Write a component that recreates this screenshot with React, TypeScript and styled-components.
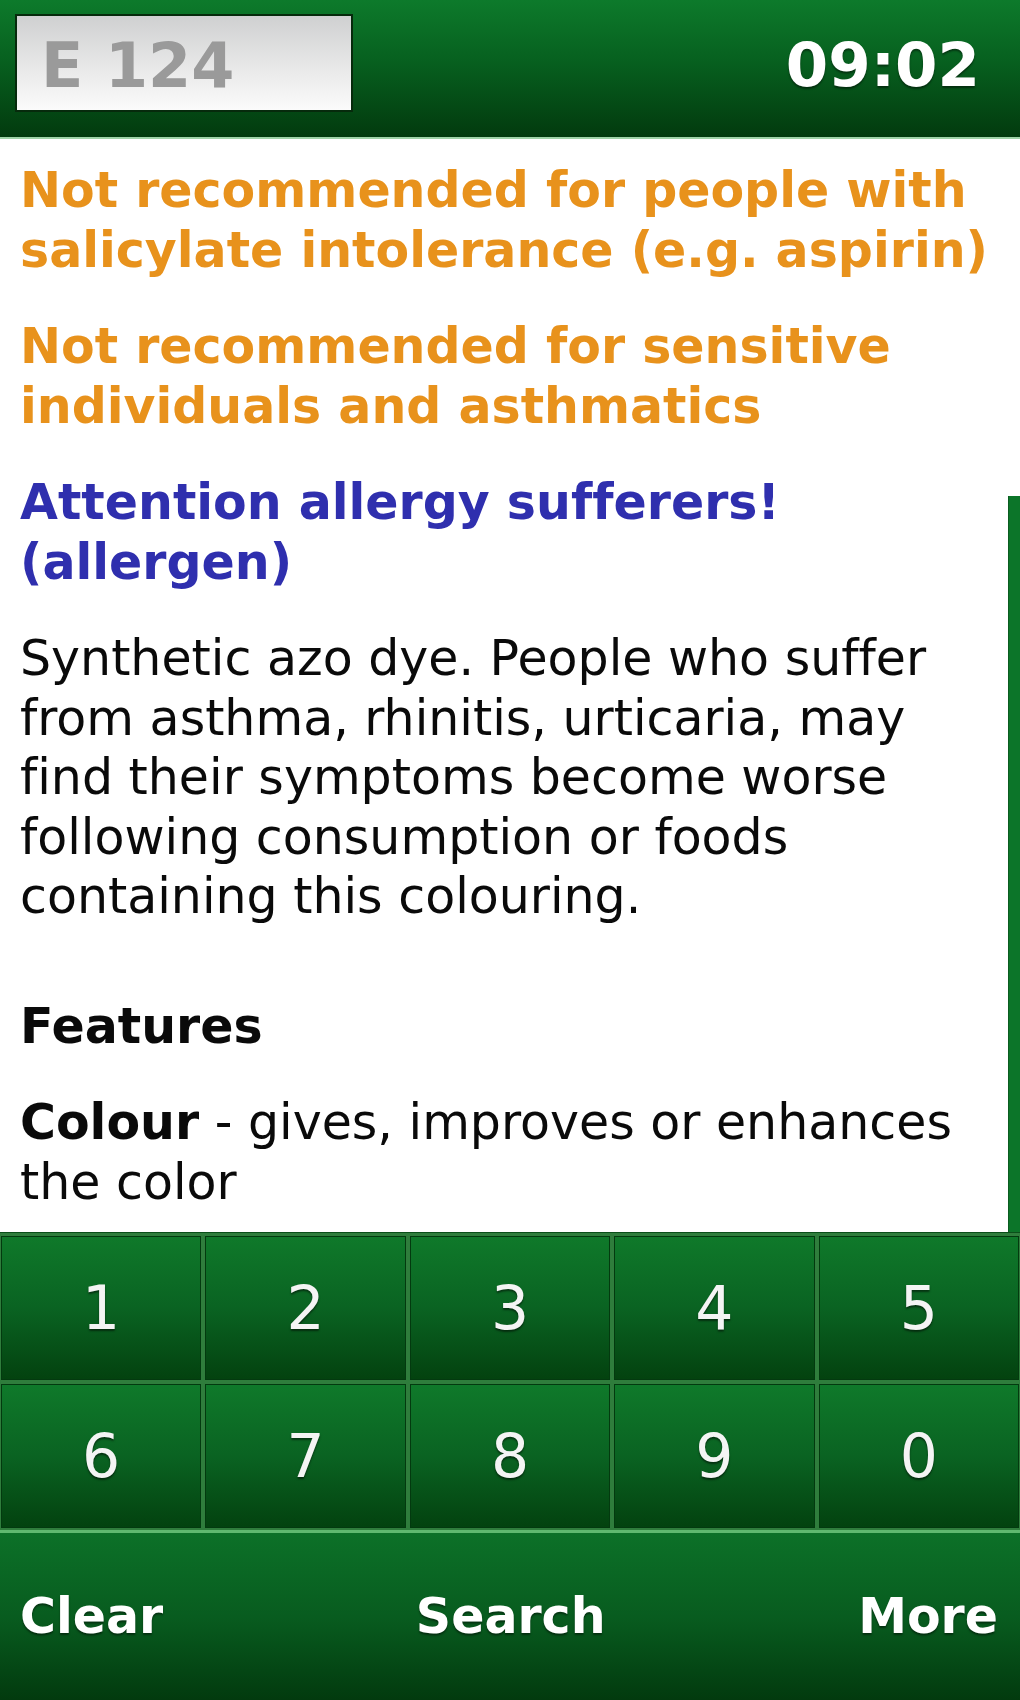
import React, { FC } from 'react'
import styled, { createGlobalStyle } from 'styled-components'

const GlobalStyle = createGlobalStyle`
  html, body {
    margin: 0;
    padding: 0;
    background: #ffffff;
  }
  body {
    font-family: 'DejaVu Sans', 'Noto Sans', sans-serif;
    font-variant-ligatures: none;
  }
`

const Screen = styled.div`
  width: 1020px;
  height: 1700px;
  display: flex;
  flex-direction: column;
  overflow: hidden;
  background: #ffffff;
`

const TopBar = styled.div`
  height: 137px;
  flex: none;
  display: flex;
  align-items: center;
  justify-content: space-between;
  padding: 0 40px 0 15px;
  background: linear-gradient(to bottom, #0d7a2b 0%, #07601f 45%, #023a0e 100%);
  border-bottom: 2px solid #9fd3a8;
`

const CodeField = styled.div`
  width: 338px;
  height: 98px;
  margin-top: -12px;
  display: flex;
  align-items: center;
  padding: 6px 0 0 24px;
  box-sizing: border-box;
  border: 2px solid #062a0c;
  background: linear-gradient(to bottom, #cfd0d1 0%, #e6e6e6 50%, #fbfbfb 100%);
  color: #9a9a9a;
  font-weight: bold;
  font-size: 62px;
`

const Clock = styled.div`
  color: #ffffff;
  font-weight: bold;
  font-size: 61px;
  margin-top: -8px;
  text-shadow: 0 2px 2px rgba(0, 0, 0, 0.45);
`

const Content = styled.div`
  position: relative;
  flex: none;
  height: 1093px;
  box-sizing: border-box;
  overflow: hidden;
  padding: 22px 12px 0 20px;
`

const Para = styled.p<{ $tone?: 'warn' | 'allergy' | 'plain'; $bold?: boolean; $gap?: number }>`
  margin: 0 0 ${p => p.$gap ?? 37}px 0;
  font-size: 49px;
  line-height: 59.5px;
  font-weight: ${p => (p.$bold ? 'bold' : 'normal')};
  color: ${p =>
    p.$tone === 'warn' ? '#e8921c' : p.$tone === 'allergy' ? '#2f2fae' : '#0a0a0a'};
`

const Scrollbar = styled.div`
  position: absolute;
  right: 0;
  top: 357px;
  bottom: 0;
  width: 11px;
  background: #0c7529;
  border-left: 1px solid #0a5c20;
`

const Keypad = styled.div`
  flex: none;
  height: 298px;
  box-sizing: border-box;
  display: grid;
  grid-template-columns: repeat(5, 1fr);
  grid-template-rows: repeat(2, 1fr);
  gap: 4px;
  padding: 3px 1px 2px 1px;
  background: #2f7d3c;
  border-top: 1px solid #0b4f1a;
`

const Key = styled.button`
  border: 1px solid #033a0f;
  border-radius: 0;
  margin: 0;
  padding: 0;
  display: flex;
  align-items: center;
  justify-content: center;
  background: linear-gradient(to bottom, #0f792a 0%, #0a6322 50%, #03420f 100%);
  color: #f4f4f4;
  font-family: 'DejaVu Sans', sans-serif;
  font-size: 60px;
  text-shadow: 0 2px 2px rgba(0, 0, 0, 0.5);
  cursor: pointer;
`

const BottomBar = styled.div`
  flex: none;
  height: 170px;
  box-sizing: border-box;
  display: flex;
  align-items: center;
  justify-content: space-between;
  padding: 0 22px 0 20px;
  background: linear-gradient(to bottom, #0c7128 0%, #085c1f 50%, #023a0e 100%);
  border-top: 3px solid #5fb96f;
`

const BarButton = styled.span`
  color: #ffffff;
  font-size: 49px;
  font-weight: bold;
  text-shadow: 0 2px 2px rgba(0, 0, 0, 0.45);
  cursor: pointer;
`

const digits = ['1', '2', '3', '4', '5', '6', '7', '8', '9', '0']

const App: FC = () => {
  return (
    <>
      <GlobalStyle />
      <Screen>
        <TopBar>
          <CodeField>E 124</CodeField>
          <Clock>09:02</Clock>
        </TopBar>
        <Content>
          <Para $tone='warn' $bold>
            Not recommended for people with salicylate intolerance (e.g. aspirin)
          </Para>
          <Para $tone='warn' $bold>
            Not recommended for sensitive individuals and asthmatics
          </Para>
          <Para $tone='allergy' $bold>
            Attention allergy sufferers! (allergen)
          </Para>
          <Para $gap={70}>
            Synthetic azo dye. People who suffer from asthma, rhinitis, urticaria, may find
            their symptoms become worse following consumption or foods containing this
            colouring.
          </Para>
          <Para $bold>Features</Para>
          <Para>
            <b>Colour</b> - gives, improves or enhances the color
          </Para>
          <Scrollbar />
        </Content>
        <Keypad>
          {digits.map(d => (
            <Key key={d}>{d}</Key>
          ))}
        </Keypad>
        <BottomBar>
          <BarButton>Clear</BarButton>
          <BarButton>Search</BarButton>
          <BarButton>More</BarButton>
        </BottomBar>
      </Screen>
    </>
  )
}

export default App
